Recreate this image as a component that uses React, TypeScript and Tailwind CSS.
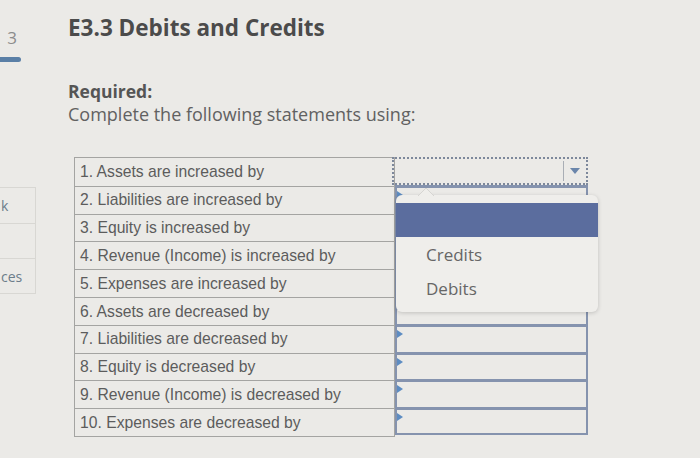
import React from 'react';

const statements = [
  '1. Assets are increased by',
  '2. Liabilities are increased by',
  '3. Equity is increased by',
  '4. Revenue (Income) is increased by',
  '5. Expenses are increased by',
  '6. Assets are decreased by',
  '7. Liabilities are decreased by',
  '8. Equity is decreased by',
  '9. Revenue (Income) is decreased by',
  '10. Expenses are decreased by',
];

const Sidebar: React.FC = () => (
  <aside className="w-[36px] shrink-0 pt-[28px] font-['Open_Sans',sans-serif]">
    <div className="pr-[19px] text-right text-[17px] leading-[20px] text-[#8c8c8c]">3</div>
    <div className="mt-[9px] h-[5px] w-[21px] rounded-r-full bg-[#5a7fa6]" />
    <div className="mt-[125px] border-y border-r border-[#d8d7d3]">
      <div className="flex h-[35px] items-center pl-px text-[14px] text-[#6c7d8a]">k</div>
      <div className="h-[35px] border-t border-[#d8d7d3]" />
      <div className="flex h-[35px] items-center border-t border-[#d8d7d3] pl-px text-[14px] text-[#6c7d8a]">ces</div>
    </div>
  </aside>
);

const Marker: React.FC = () => (
  <svg className="absolute left-0 top-[3px]" width="6" height="8" viewBox="0 0 6 8">
    <path d="M0 0 L6 4 L0 8 Z" fill="#5d8cc2" />
  </svg>
);

const AnswerTable: React.FC = () => (
  <div className="relative ml-[6px] mt-[31px] flex">
    <div className="w-[321px] border border-[#a4a4a2] font-['Liberation_Sans',Arial,sans-serif] text-[15.7px] text-[#5c5c5c]">
      {statements.map((s, i) => (
        <div
          key={s}
          className={`flex h-[27.8px] items-center pl-[5px] ${i > 0 ? 'border-t border-[#a4a4a2]' : ''}`}
        >
          {s}
        </div>
      ))}
    </div>

    <div className="-ml-[3px] w-[196px]">
      {/* focused select */}
      <div className="flex h-[27.8px] items-center justify-end border-2 border-dotted border-[#7d889b]">
        <div className="h-[20px] w-px bg-[#a9aeb5]" />
        <div className="flex w-[22px] justify-center">
          <svg width="10" height="6" viewBox="0 0 10 6">
            <path d="M0 0 L10 0 L5 6 Z" fill="#6b86ab" />
          </svg>
        </div>
      </div>
      {statements.slice(1).map((s, i) => (
        <div
          key={s}
          className={`relative ml-[3px] h-[27.8px] w-[193px] border-x-2 border-t-[3px] border-[#8593ae] ${i === 8 ? 'border-b-2' : ''}`}
        >
          <Marker />
        </div>
      ))}
    </div>

    {/* open dropdown */}
    <div className="absolute left-[322px] top-[38px] w-[202px] rounded-md bg-[#efeeeb] pt-[8px] pb-[7px] font-['Open_Sans',sans-serif] shadow-[0_1px_4px_rgba(0,0,0,0.18)]">
      <svg className="absolute left-[22px] -top-[7px]" width="16" height="8" viewBox="0 0 16 8">
        <path d="M0 8 L8 0 L16 8" fill="#efeeeb" stroke="#d6d5d2" strokeWidth="1" />
      </svg>
      <div className="h-[34px] bg-[#5b6d9e]" />
      <div className="flex h-[34px] items-center pl-[30px] pt-[2px] text-[17px] text-[#666]">Credits</div>
      <div className="flex h-[34px] items-center pl-[30px] pt-[2px] text-[17px] text-[#666]">Debits</div>
    </div>
  </div>
);

export default function App() {
  return (
    <div className="flex h-[458px] w-[700px] overflow-hidden bg-[#ebeae7]">
      <Sidebar />
      <main className="pl-[32px] pt-[14px] font-['Open_Sans',sans-serif]">
        <h1 className="text-[22.5px] font-bold leading-[28px] text-[#4b4b4b]">E3.3 Debits and Credits</h1>
        <p className="mt-[38px] text-[17.5px] font-bold leading-[22px] text-[#555]">Required:</p>
        <p className="text-[18px] leading-[24px] text-[#616161]">Complete the following statements using:</p>
        <AnswerTable />
      </main>
    </div>
  );
}
